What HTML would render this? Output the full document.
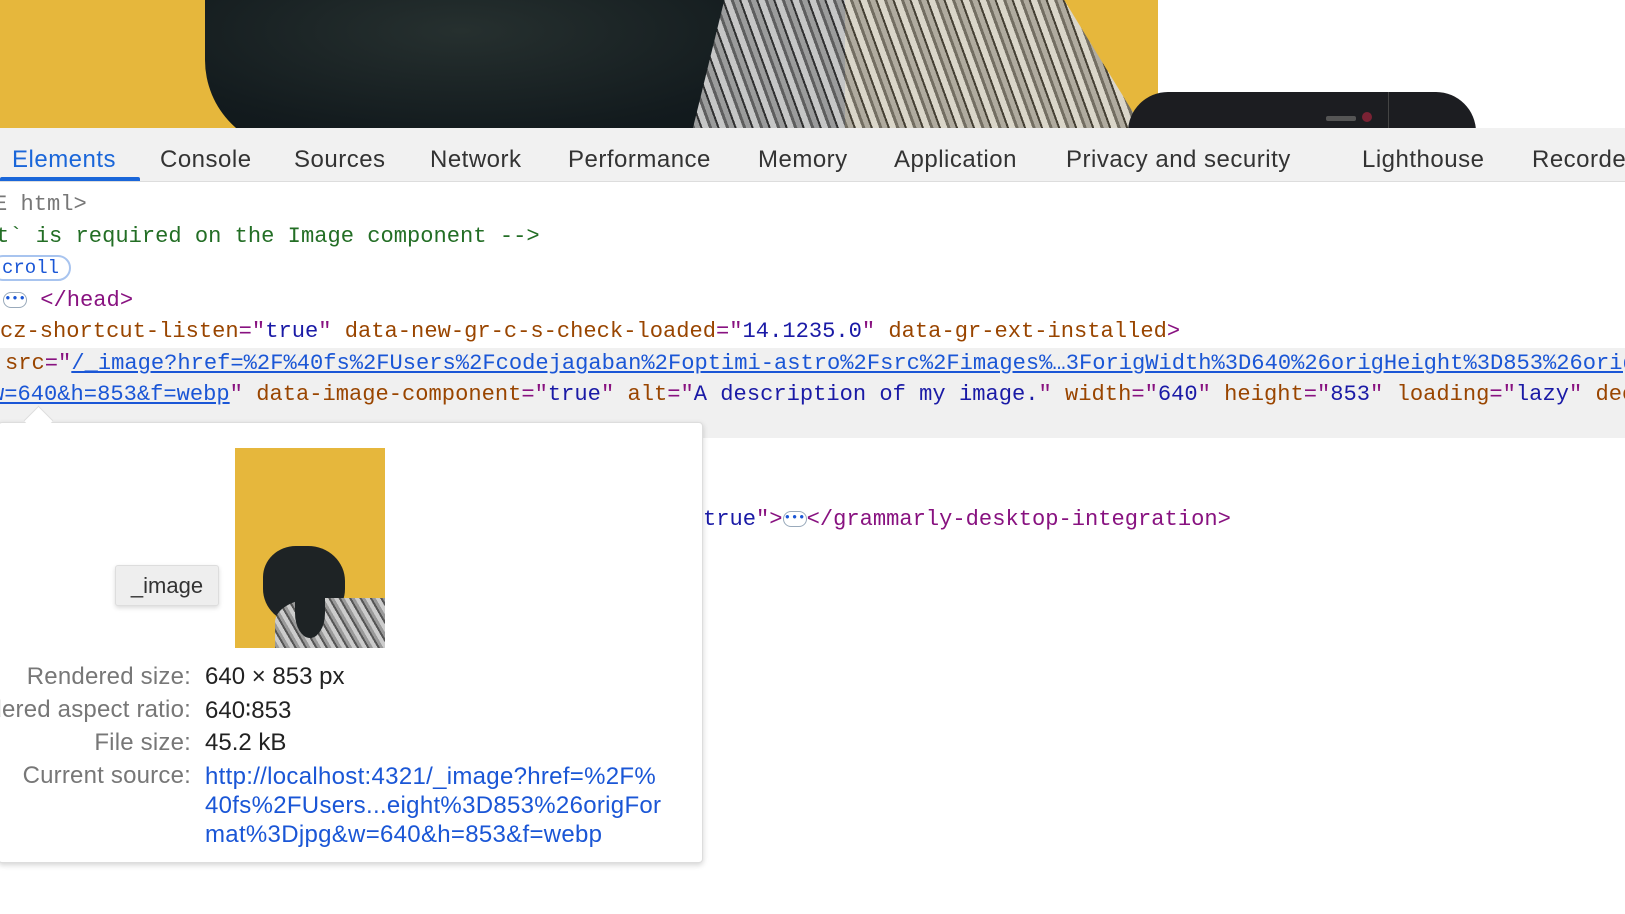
<!DOCTYPE html>
<html><head><meta charset="utf-8"><style>
html,body{margin:0;padding:0;overflow:hidden}
body{width:1625px;height:914px;background:#fff;font-family:"Liberation Sans",sans-serif}
#wrap{position:relative;width:1625px;height:914px;overflow:hidden}
.abs{position:absolute}
#photo{left:0;top:0;width:1158px;height:128px;background:#e6b73c;overflow:hidden}
.tabs{left:0;top:128px;width:1625px;height:53px;background:#f1f1f1;border-bottom:1px solid #ddd;overflow:hidden}
.tab{position:absolute;top:6px;line-height:52px;font-size:24px;letter-spacing:0.5px;color:#333;white-space:nowrap}
.code{font-family:"Liberation Mono",monospace;font-size:22.1px;white-space:pre;line-height:31px}
.an{color:#994500}.av{color:#1a1aa6}.tg{color:#881280}.cm{color:#236e25}.ln{color:#1a56d6;text-decoration:underline}
.lab{position:absolute;right:1434px;font-size:24px;letter-spacing:0.2px;color:#777;white-space:nowrap;text-align:right}
.val{position:absolute;left:205px;font-size:24px;color:#222;white-space:nowrap}
.dots{display:inline-block;width:24px;height:16px;border:1px solid #9ab;border-radius:9px;vertical-align:middle;font-size:12px;line-height:12px;text-align:center;color:#1a56d6;font-weight:bold;box-sizing:border-box}
</style></head><body><div id="wrap">
<div id="photo" class="abs">
 <div class="abs" style="left:205px;top:-20px;width:640px;height:170px;background:radial-gradient(ellipse at 40% 30%,#26302f 0%,#131b1e 60%,#0e1417 100%);border-radius:0 0 0 90px"></div>
 <div class="abs" style="left:690px;top:-10px;width:460px;height:150px;background:repeating-linear-gradient(70deg,#d9d9d9 0 6px,#666 6px 9px,#aaa 9px 14px,#333 14px 16px);clip-path:polygon(8% 0,80% 0,100% 100%,0 100%);opacity:.9"></div>
</div>
<div class="abs" style="left:1128px;top:92px;width:348px;height:60px;background:#1c1d21;border-radius:40px 40px 0 0"></div>
<div class="abs" style="left:1388px;top:92px;width:1px;height:36px;background:#444"></div>
<div class="abs" style="left:1362px;top:112px;width:10px;height:10px;border-radius:5px;background:#7a2234"></div>
<div class="abs" style="left:1326px;top:116px;width:30px;height:5px;background:#555;border-radius:2px"></div>
<div class="abs tabs">
 <div class="tab" style="left:12px;color:#1a66d9">Elements</div>
 <div class="abs" style="left:0;top:49px;width:140px;height:4px;background:#1a66d9;border-radius:2px 2px 0 0"></div>
 <div class="tab" style="left:160px">Console</div>
 <div class="tab" style="left:294px">Sources</div>
 <div class="tab" style="left:430px">Network</div>
 <div class="tab" style="left:568px">Performance</div>
 <div class="tab" style="left:758px">Memory</div>
 <div class="tab" style="left:894px">Application</div>
 <div class="tab" style="left:1066px">Privacy and security</div>
 <div class="tab" style="left:1362px">Lighthouse</div>
 <div class="tab" style="left:1532px">Recorder</div>
</div>
<div class="abs" style="left:0;top:348px;width:1625px;height:90px;background:#f0f0f0"></div>
<div class="abs code" style="left:-6px;top:189px;color:#777">E html&gt;</div>
<div class="abs code cm" style="left:-4px;top:221px">t` is required on the Image component --&gt;</div>
<div class="abs code" style="left:-10px;top:255px;color:#1a56d6;border:2px solid #a8c4ef;border-radius:14px;line-height:22px;padding:0 10px 0 10px;font-size:19px">croll</div>
<div class="abs code" style="left:3px;top:285px"><span class="dots">•••</span> <span class="tg">&lt;/head&gt;</span></div>
<div class="abs code" style="left:0;top:316px"><span class="an">cz-shortcut-listen</span><span class="tg">="</span><span class="av">true</span><span class="tg">"</span> <span class="an">data-new-gr-c-s-check-loaded</span><span class="tg">="</span><span class="av">14.1235.0</span><span class="tg">"</span> <span class="an">data-gr-ext-installed</span><span class="tg">&gt;</span></div>
<div class="abs code" style="left:5px;top:348px"><span class="an">src</span><span class="tg">="</span><span class="ln">/_image?href=%2F%40fs%2FUsers%2Fcodejagaban%2Foptimi-astro%2Fsrc%2Fimages%…3ForigWidth%3D640%26origHeight%3D853%26origFormat</span></div>
<div class="abs code" style="left:-9px;top:379px"><span class="ln">w=640&amp;h=853&amp;f=webp</span><span class="tg">"</span> <span class="an">data-image-component</span><span class="tg">="</span><span class="av">true</span><span class="tg">"</span> <span class="an">alt</span><span class="tg">="</span><span class="av">A description of my image.</span><span class="tg">"</span> <span class="an">width</span><span class="tg">="</span><span class="av">640</span><span class="tg">"</span> <span class="an">height</span><span class="tg">="</span><span class="av">853</span><span class="tg">"</span> <span class="an">loading</span><span class="tg">="</span><span class="av">lazy</span><span class="tg">"</span> <span class="an">decoding</span></div>
<div class="abs code" style="left:703px;top:504px"><span class="av">true</span><span class="tg">"&gt;</span><span class="dots">•••</span><span class="tg">&lt;/grammarly-desktop-integration&gt;</span></div>
<div class="abs" style="left:-2px;top:422px;width:703px;height:439px;background:#fff;border:1px solid #ddd;border-radius:4px;box-shadow:0 2px 6px rgba(0,0,0,.18)"></div>
<div class="abs" style="left:28px;top:410px;width:20px;height:20px;background:#fff;transform:rotate(45deg);border-left:1px solid #ddd;border-top:1px solid #ddd"></div>
<div class="abs" style="left:235px;top:448px;width:150px;height:200px;background:#e6b73c;overflow:hidden">
 <div class="abs" style="left:28px;top:98px;width:82px;height:78px;background:#1e2325;border-radius:40% 45% 45% 45%"></div>
 <div class="abs" style="left:40px;top:150px;width:110px;height:60px;background:repeating-linear-gradient(60deg,#ccc 0 4px,#555 4px 6px,#999 6px 9px);border-radius:40% 0 0 0"></div>
 <div class="abs" style="left:60px;top:140px;width:30px;height:50px;background:#1e2325;border-radius:0 0 50% 50%"></div>
</div>
<div class="abs" style="left:115px;top:565px;width:102px;height:39px;background:#eee;border:1px solid #ddd;border-radius:3px;box-shadow:0 2px 5px rgba(0,0,0,.15);font-size:22px;line-height:39px;text-align:center;color:#333">_image</div>
<div class="lab" style="top:663px">Rendered size:</div><div class="val" style="top:663px">640 × 853 px</div>
<div class="lab" style="top:696px">Rendered aspect ratio:</div><div class="val" style="top:696px">640∶853</div>
<div class="lab" style="top:729px">File size:</div><div class="val" style="top:729px">45.2 kB</div>
<div class="lab" style="top:762px">Current source:</div>
<div class="val" style="top:762px;color:#1a56d6;line-height:29px;letter-spacing:0.3px">http://localhost:4321/_image?href=%2F%<br>40fs%2FUsers...eight%3D853%26origFor<br>mat%3Djpg&amp;w=640&amp;h=853&amp;f=webp</div>
</div></body></html>
